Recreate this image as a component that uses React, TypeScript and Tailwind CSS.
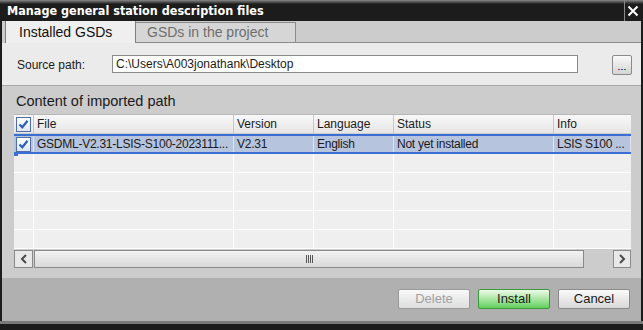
import React from "react";

const ui = { fontFamily: '"Liberation Sans", Arial, sans-serif' };

function Check() {
  return (
    <span className="flex h-[15px] w-[15px] items-center justify-center border border-[#4d6ea8] bg-gradient-to-b from-white to-[#dfe6f2]">
      <svg width="11" height="11" viewBox="0 0 11 11">
        <path d="M1.5 5.5 L4.3 8.3 L9.5 1.8" fill="none" stroke="#2a5fc4" strokeWidth="2.2" />
      </svg>
    </span>
  );
}

const cols = [
  { w: "w-[200px]", label: "File", val: "GSDML-V2.31-LSIS-S100-2023111..." },
  { w: "w-[80px]", label: "Version", val: "V2.31" },
  { w: "w-[80px]", label: "Language", val: "English" },
  { w: "w-[160px]", label: "Status", val: "Not yet installed" },
  { w: "w-[77px]", label: "Info", val: "LSIS S100 ..." },
];

function Btn({ children, kind }: { children: React.ReactNode; kind: "off" | "ok" | "std" }) {
  const cls =
    kind === "ok"
      ? "border-[#3a9a3a] bg-gradient-to-b from-[#eefaea] via-[#a8e6a2] to-[#62d05c] text-[#1a1a1a]"
      : kind === "off"
      ? "border-[#9a9a9a] bg-gradient-to-b from-[#f8f8f8] to-[#dedede] text-[#a0a0a0]"
      : "border-[#8a8a8a] bg-gradient-to-b from-[#fafafa] to-[#d8d8d8] text-[#1a1a1a]";
  return (
    <div className={`flex h-[20px] w-[72px] items-center justify-center rounded-[2px] border text-[13px] ${cls}`}>
      {children}
    </div>
  );
}

export default function App() {
  return (
    <div className="flex h-[330px] w-[643px] flex-col overflow-hidden bg-[#1c1c1c]" style={ui}>
      {/* title bar */}
      <div className="flex h-[21px] items-stretch bg-gradient-to-b from-[#8a8a8a] via-[#1c1c1c] via-[20%] to-[#1c1c1c]">
        <div
          className="flex-1 pl-[7px] pt-[2px] text-[12.5px] font-bold leading-[18px] text-white"
          style={{ fontFamily: '"DejaVu Sans Condensed", "DejaVu Sans", sans-serif' }}
        >
          Manage general station description files
        </div>
        <div className="mr-[2px] flex w-[17px] items-center justify-center border-l border-[#8a8a8a]">
          <svg width="12" height="12" viewBox="0 0 12 12">
            <path d="M1.5 1.5 L10.5 10.5 M10.5 1.5 L1.5 10.5" stroke="white" strokeWidth="2" />
          </svg>
        </div>
      </div>

      <div className="mx-[2px] flex flex-col">
        {/* tabs */}
        <div className="flex h-[22px] items-end bg-[#cccccc]">
          <div className="ml-[3px] flex h-[22px] w-[131px] items-center border-x border-[#808080] bg-[#efefef] pl-[13px] pt-[1px] text-[14px] text-[#111]">
            Installed GSDs
          </div>
          <div className="flex h-[21px] w-[160px] items-center border-b border-r border-t border-[#8a8a8a] bg-[#d6d6d6] pl-[11px] text-[14px] text-[#6e6e6e]">
            GSDs in the project
          </div>
          <div className="h-[1px] flex-1 bg-[#8a8a8a]" />
        </div>

        {/* source path */}
        <div className="flex h-[43px] items-start border-b border-[#a8a8a8] bg-[#ebebeb] pt-[12px]">
          <div className="w-[110px] pl-[15px] pt-[1px] text-[12px] text-[#1a1a1a]">Source path:</div>
          <div className="flex h-[18px] w-[466px] items-center border border-[#8a8a8a] bg-white pl-[3px] text-[12px] text-[#1a1a1a]">
            C:\Users\A003jonathank\Desktop
          </div>
          <div className="ml-[34px] flex h-[20px] w-[20px] items-end justify-center rounded-[2px] border border-[#8a8a8a] bg-gradient-to-b from-[#fafafa] to-[#d4d4d4] pb-[4px]">
            <span className="flex gap-[1px]">
              <span className="h-[1px] w-[2px] bg-[#c03030]" />
              <span className="h-[1px] w-[2px] bg-[#3050c0]" />
              <span className="h-[1px] w-[2px] bg-[#308030]" />
            </span>
          </div>
        </div>

        {/* content */}
        <div className="flex h-[192px] flex-col bg-[#cccccc] pl-[12px] pr-[10px]">
          <div className="pl-[2px] pt-[5px] text-[14.5px] leading-[20px] text-[#1a1a1a]">Content of imported path</div>
          <div className="mt-[3px] flex w-[617px] flex-col">
            {/* header */}
            <div className="flex h-[19px] border-t border-[#b8b8b8] bg-gradient-to-b from-[#f8f8f8] to-[#e6e6e6] text-[12px] text-[#1a1a1a]">
              <div className="flex w-[20px] items-center justify-center border-r border-[#c8c8c8]">
                <Check />
              </div>
              {cols.map((c) => (
                <div key={c.label} className={`${c.w} flex items-center border-r border-[#c8c8c8] pl-[3px] last:border-r-0`}>
                  {c.label}
                </div>
              ))}
            </div>
            {/* selected row */}
            <div className="relative mt-[1px] flex h-[20px] border-y-2 border-[#3c6fd4] bg-[#b7c4de] text-[12px] text-[#1a1a1a]">
              <div className="flex w-[20px] items-center justify-center border-r border-[#dfe5f0]">
                <Check />
              </div>
              {cols.map((c) => (
                <div
                  key={c.label}
                  className={`${c.w} flex items-center overflow-hidden whitespace-nowrap border-r border-[#dfe5f0] pl-[3px] tracking-[-0.25px] last:border-r-0`}
                >
                  {c.val}
                </div>
              ))}
              <span className="absolute bottom-[-4px] left-[0px] h-[4px] w-[4px] bg-[#3c6fd4]" />
            </div>
            {/* empty rows */}
            {[0, 1, 2, 3, 4].map((i) => (
              <div key={i} className="flex h-[19px] border-b border-white bg-[#efefef]">
                <div className="w-[20px] border-r border-white" />
                {cols.map((c) => (
                  <div key={c.label} className={`${c.w} border-r border-white last:border-r-0`} />
                ))}
              </div>
            ))}
            {/* scrollbar */}
            <div className="mt-[1px] flex h-[18px] bg-[#cccccc]">
              <div className="flex w-[19px] items-center justify-center border border-[#8a8a8a] bg-[#e8e8e8]">
                <svg width="8" height="10" viewBox="0 0 8 10">
                  <path d="M6 1 L2 5 L6 9" fill="none" stroke="#4a4a4a" strokeWidth="2" />
                </svg>
              </div>
              <div className="ml-[1px] flex w-[550px] items-center justify-center border border-[#8a8a8a] bg-gradient-to-b from-[#f2f2f2] to-[#dadada]">
                <span className="flex gap-[1px]">
                  {[0, 1, 2, 3].map((k) => (
                    <span key={k} className="h-[8px] w-[1px] bg-[#555]" />
                  ))}
                </span>
              </div>
              <div className="flex-1" />
              <div className="flex w-[18px] items-center justify-center border border-[#8a8a8a] bg-[#e8e8e8]">
                <svg width="8" height="10" viewBox="0 0 8 10">
                  <path d="M2 1 L6 5 L2 9" fill="none" stroke="#4a4a4a" strokeWidth="2" />
                </svg>
              </div>
            </div>
          </div>
        </div>

        {/* footer */}
        <div className="flex h-[43px] items-start justify-end gap-[8px] bg-[#b0b0b0] pr-[11px] pt-[11px]">
          <Btn kind="off">Delete</Btn>
          <Btn kind="ok">Install</Btn>
          <Btn kind="std">Cancel</Btn>
        </div>
      </div>
      <div className="h-[3px] bg-[#7a7a7a]" />
    </div>
  );
}
